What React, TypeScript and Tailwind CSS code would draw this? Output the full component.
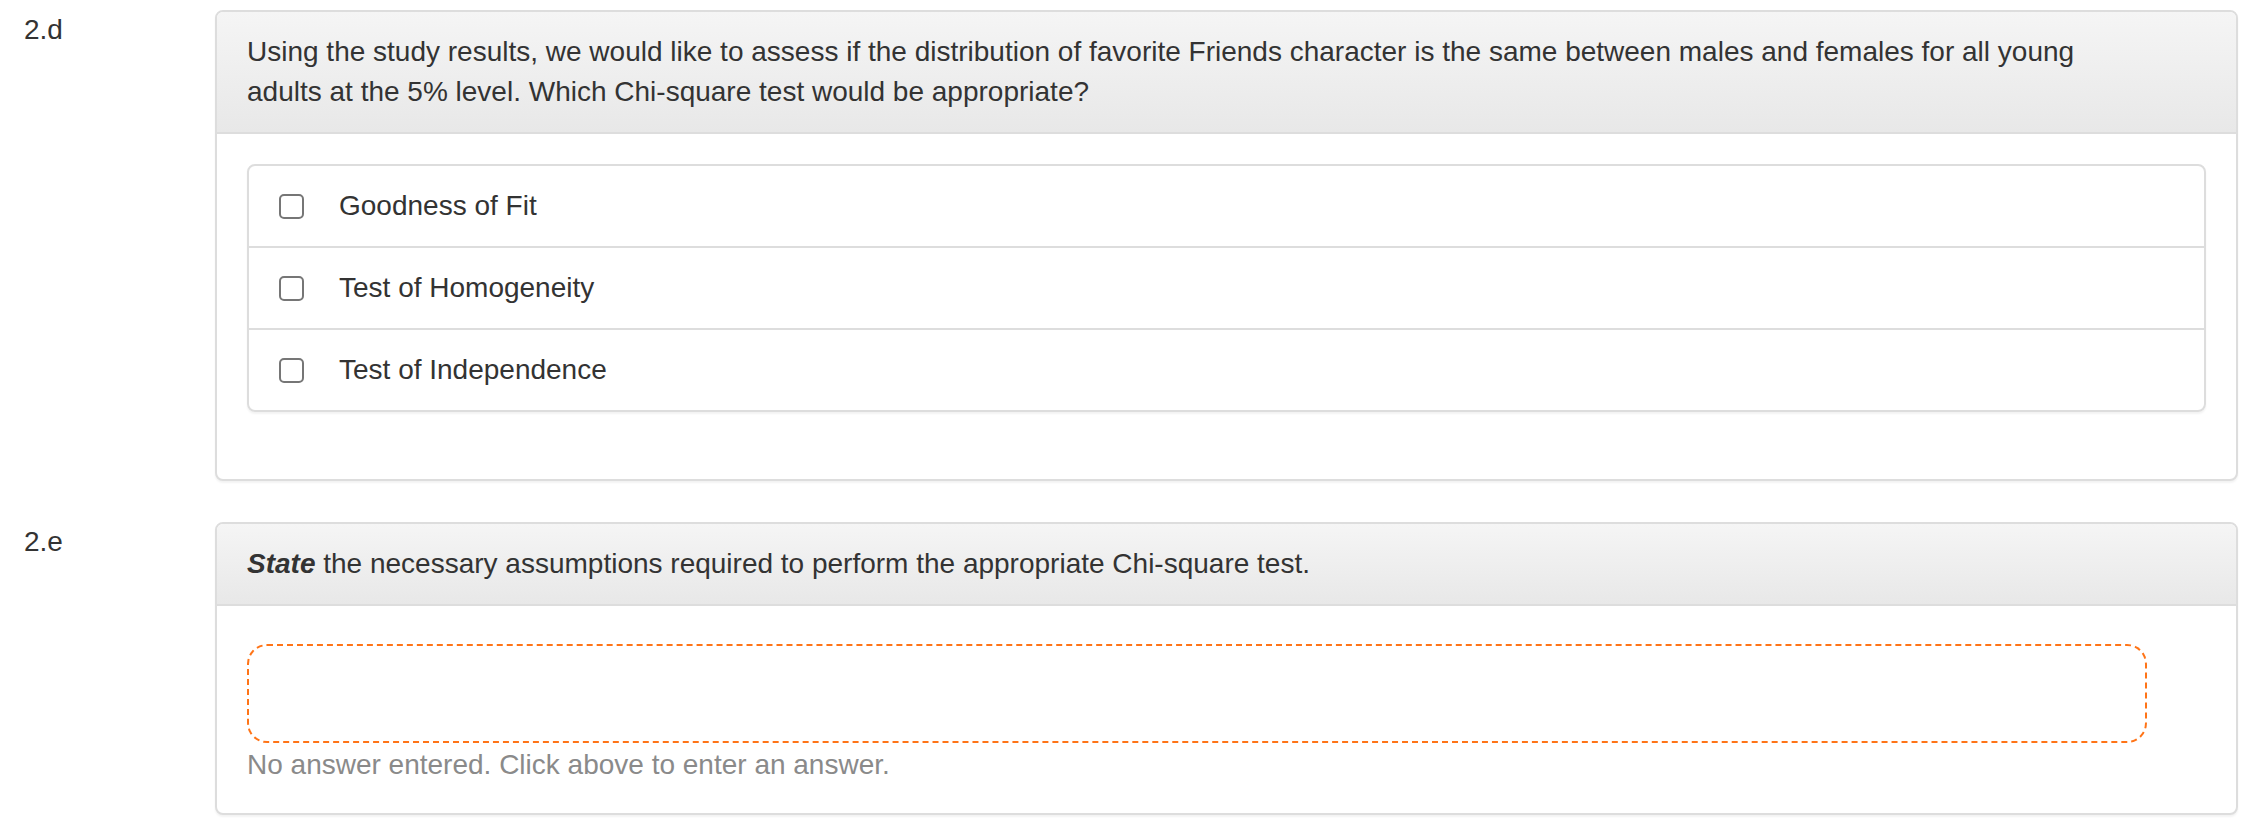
import React from 'react';

const options = ['Goodness of Fit', 'Test of Homogeneity', 'Test of Independence'];

const Checkbox: React.FC = () => (
  <span className="inline-block w-[25px] h-[25px] shrink-0 rounded-[5px] border-2 border-[#767676] bg-white" />
);

export default function App() {
  return (
    <div className="w-[2254px] h-[836px] bg-white text-[#333] text-[28px] leading-[40px] font-['Helvetica_Neue','Liberation_Sans',Arial,sans-serif]">
      <div className="pt-[10px] pr-[16px] flex flex-col gap-[41px]">
        {/* Question 2.d */}
        <div className="flex">
          <div className="w-[215px] pl-[24px] shrink-0">2.d</div>
          <div className="flex-1 rounded-[8px] border-2 border-[#ddd] bg-white shadow-[0_2px_2px_rgba(0,0,0,0.05)] overflow-hidden">
            <div className="px-[30px] py-[20px] bg-gradient-to-b from-[#f5f5f5] to-[#e8e8e8] border-b-2 border-[#ddd]">
              Using the study results, we would like to assess if the distribution of favorite Friends character is the same between males and females for all young
              <br />
              adults at the 5% level. Which Chi-square test would be appropriate?
            </div>
            <div className="p-[30px]">
              <div className="mb-[37px] rounded-[8px] border-2 border-[#ddd] shadow-[0_2px_2px_rgba(0,0,0,0.05)] divide-y-2 divide-[#ddd]">
                {options.map((opt) => (
                  <div key={opt} className="flex items-center py-[20px] px-[30px] gap-[35px]">
                    <Checkbox />
                    <span>{opt}</span>
                  </div>
                ))}
              </div>
            </div>
          </div>
        </div>

        {/* Question 2.e */}
        <div className="flex">
          <div className="w-[215px] pl-[24px] shrink-0">2.e</div>
          <div className="flex-1 rounded-[8px] border-2 border-[#ddd] bg-white shadow-[0_2px_2px_rgba(0,0,0,0.05)] overflow-hidden">
            <div className="px-[30px] py-[20px] bg-gradient-to-b from-[#f5f5f5] to-[#e8e8e8] border-b-2 border-[#ddd]">
              <b className="italic font-bold">State</b> the necessary assumptions required to perform the appropriate Chi-square test.
            </div>
            <div className="px-[30px] pt-[38px] pb-[28px]">
              <div className="w-[1900px] h-[99px] rounded-[20px] border-2 border-dashed border-[#ff7417]" />
              <div className="mt-[2px] text-[#8a8a8a]">No answer entered. Click above to enter an answer.</div>
            </div>
          </div>
        </div>
      </div>
    </div>
  );
}
